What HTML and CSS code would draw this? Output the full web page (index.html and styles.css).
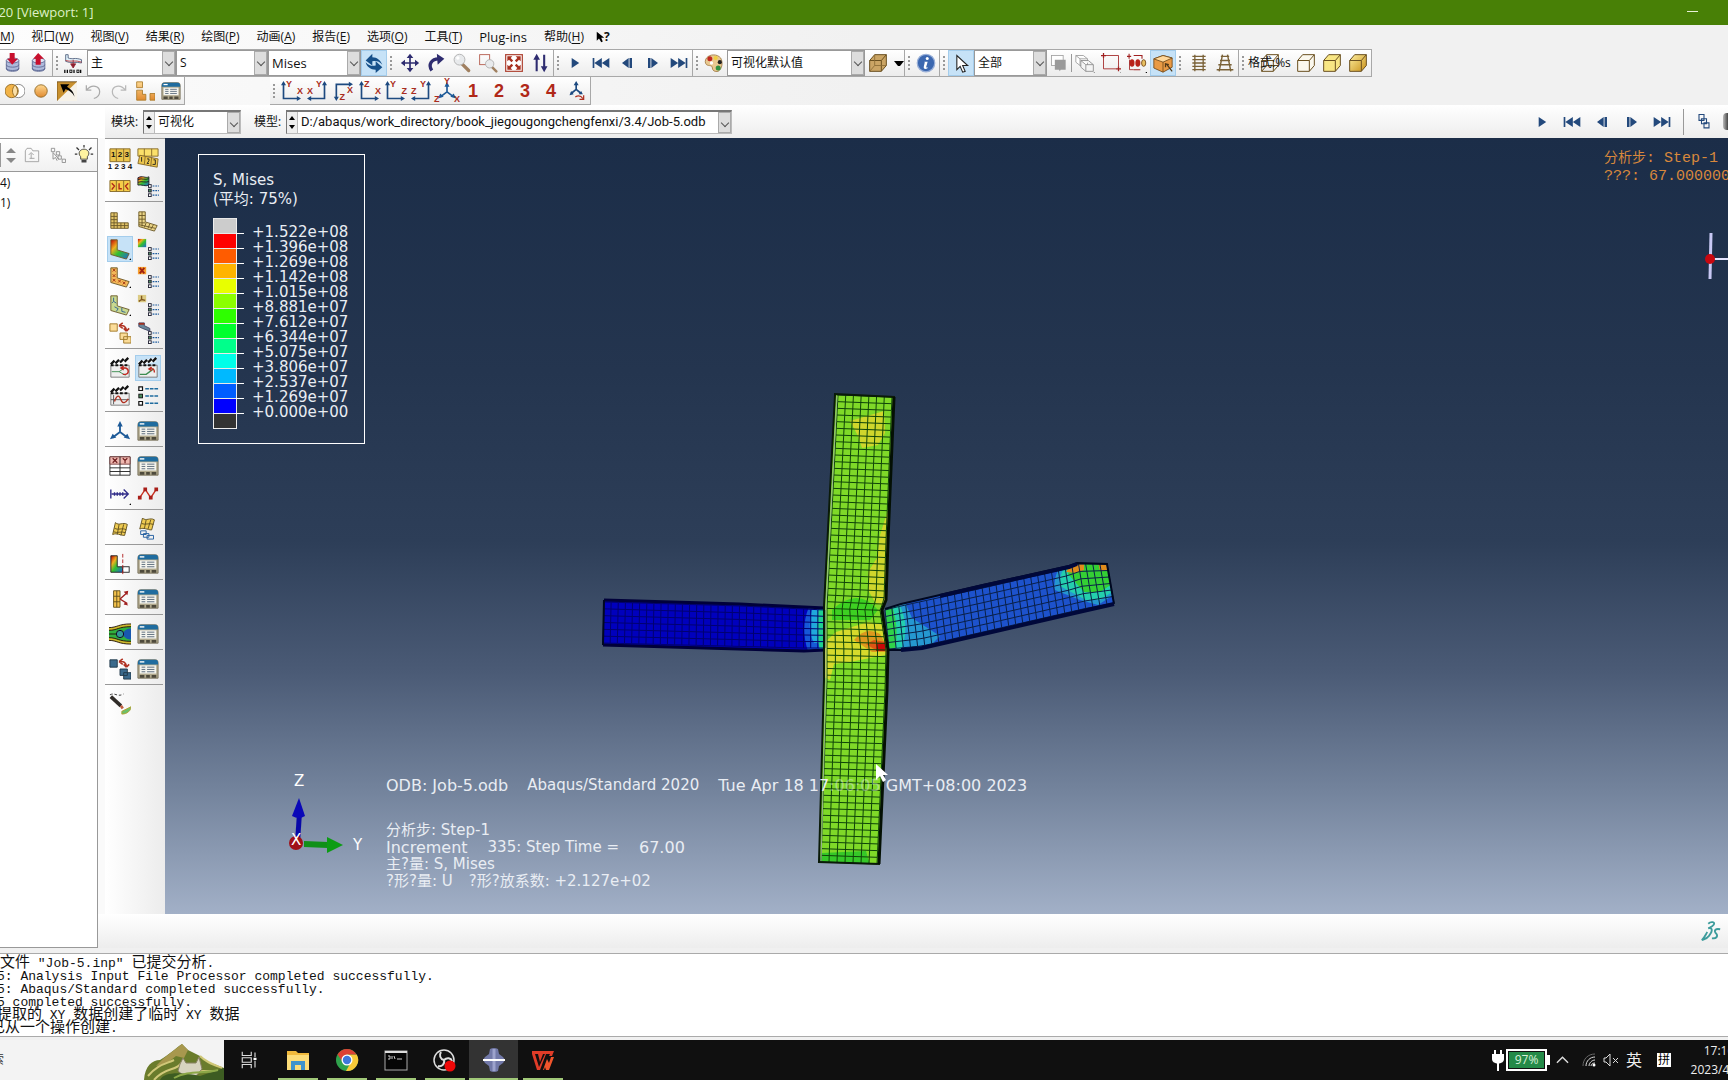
FILE: index.html
```html
<!DOCTYPE html>
<html lang="zh-CN">
<head>
<meta charset="utf-8">
<title>Abaqus/CAE 2020 [Viewport: 1]</title>
<link rel="stylesheet" href="styles.css">
</head>
<body>
<svg class="defs" aria-hidden="true">
  <defs>
    <linearGradient id="rainbow" x1="0" y1="0" x2="1" y2="1"><stop offset="0" stop-color="#c00000"/><stop offset=".3" stop-color="#f0b020"/><stop offset=".55" stop-color="#30c030"/><stop offset="1" stop-color="#2060e0"/></linearGradient>
    <linearGradient id="gold" x1="0" y1="0" x2="1" y2="1"><stop offset="0" stop-color="#fff0a0"/><stop offset="1" stop-color="#c89018"/></linearGradient>
    <linearGradient id="orange" x1="0" y1="0" x2="0" y2="1"><stop offset="0" stop-color="#ffd890"/><stop offset="1" stop-color="#e08a30"/></linearGradient>
    <symbol id="db" viewBox="0 0 24 24"><path d="M4 9v10c0 4 15 4 15 0V9" fill="#aebadb" stroke="#5a6590"/><ellipse cx="11.500" cy="9" rx="7.500" ry="3" fill="#dfe5f5" stroke="#5a6590"/><path d="M4 14c0 4 15 4 15 0M4 18c0 4 15 4 15 0" fill="none" stroke="#5a6590"/></symbol>
    <symbol id="open-db" viewBox="0 0 24 24"><use href="#db"/><path d="M8 0h6v7h4l-7 7-6-7h3z" fill="#c8102e"/></symbol>
    <symbol id="save-db" viewBox="0 0 24 24"><use href="#db"/><path d="M8 14h6V7h4l-7-7-6 7h3z" fill="#c8102e"/></symbol>
    <symbol id="field" viewBox="0 0 24 24"><path d="M2 2h3v4c5 2 8-1 16 2v4c-7-2-13 1-19-2z" fill="#dff0fa" stroke="#4a5a78"/><path d="M2 9c5 2 12-1 19 2" stroke="#c03030" fill="none"/><path d="M11 8v6M8 13h6l-3 5z" stroke="#902030" fill="#902030"/><path d="M1 20v4M4 20v4M12 20v4M20 20v4" stroke="#000" stroke-width="1.500"/><rect x="7" y="20.500" width="2.500" height="3" fill="none" stroke="#000"/><rect x="15.500" y="20.500" width="2.500" height="3" fill="none" stroke="#000"/></symbol>
    <symbol id="sync" viewBox="0 0 24 24"><path d="M2 9l8-8v4c6 0 10 4 12 9-4-4-7-5-12-4v5zM22 17l-8 7v-4C8 20 3 16 2 11c4 4 7 5 12 4v-5z" fill="#16508a"/></symbol>
    <symbol id="move" viewBox="0 0 24 24"><path d="M12 3v18M3 12h18" stroke="#2e2c70" stroke-width="2"/><path d="M12 1l4 5H8zM12 23l4-5H8zM1 12l5-4v8zM23 12l-5-4v8z" fill="#2e2c70"/></symbol>
    <symbol id="rotate" viewBox="0 0 24 24"><path d="M7 21C2 14 7 7 15 7" fill="none" stroke="#2e2c70" stroke-width="4"/><path d="M13 1l9 6-8 7z" fill="#2e2c70"/></symbol>
    <symbol id="zoom" viewBox="0 0 24 24"><path d="M12 13l8 8" stroke="#a08060" stroke-width="4" stroke-linecap="round"/><circle cx="9" cy="8" r="6.500" fill="#e8eaec" stroke="#aaa"/><circle cx="7" cy="6" r="2" fill="#fff"/></symbol>
    <symbol id="zoombox" viewBox="0 0 24 24"><rect x="2" y="2" width="12" height="12" fill="none" stroke="#b05040"/><path d="M16 16l6 6" stroke="#a08060" stroke-width="3" stroke-linecap="round"/><circle cx="14" cy="13" r="5" fill="#e8eaec" stroke="#aaa"/></symbol>
    <symbol id="fit" viewBox="0 0 24 24"><rect x="2" y="2" width="20" height="20" fill="#fff" stroke="#b04838" stroke-width="1.500"/><path d="M4 4h6L8 6l3 3-2 2-3-3-2 2zM20 4h-6l2 2-3 3 2 2 3-3 2 2zM4 20h6l-2-2 3-3-2-2-3 3-2-2zM20 20h-6l2-2-3-3 2-2 3 3 2-2z" fill="#a83020"/></symbol>
    <symbol id="updown" viewBox="0 0 24 24"><path d="M8 5v17M17 2v17" stroke="#2e2c70" stroke-width="2.500"/><path d="M8 1l4 7H4zM17 23l4-7h-8z" fill="#2e2c70"/></symbol>
    <symbol id="play" viewBox="0 0 24 24"><path d="M8 6l9 6-9 6z" fill="#23497c"/></symbol>
    <symbol id="first" viewBox="0 0 24 24"><path d="M2 6h2v12H2zM13 6v12l-9-6zM22 6v12l-9-6z" fill="#23497c"/></symbol>
    <symbol id="prev" viewBox="0 0 24 24"><path d="M15 6h3v12h-3zM14 6v12l-8-6z" fill="#23497c"/></symbol>
    <symbol id="next" viewBox="0 0 24 24"><path d="M6 6h3v12H6zM10 6v12l8-6z" fill="#23497c"/></symbol>
    <symbol id="last" viewBox="0 0 24 24"><path d="M20 6h2v12h-2zM11 6v12l9-6zM2 6v12l9-6z" fill="#23497c"/></symbol>
    <symbol id="palette" viewBox="0 0 24 24"><path d="M3 6C7 1 16 1 20 6c3 5 2 13-3 16-4 1-7-1-7-4 0-4-4-2-7-4-2-2-2-5 0-8z" fill="#e8c890" stroke="#a07840"/><circle cx="7" cy="7" r="3" fill="#c02820"/><circle cx="14" cy="6" r="2.500" fill="#f0d040"/><circle cx="19" cy="11" r="2.500" fill="#202020"/><circle cx="17" cy="18" r="3" fill="#309040"/><circle cx="9" cy="12" r="2" fill="#fff"/></symbol>
    <symbol id="cube" viewBox="0 0 24 24"><path d="M2 9l6-7h14v13l-6 7H2z" stroke="#6a5020" stroke-width="1.200"/><path d="M2 9h14v13M16 9l6-7" fill="none" stroke="#6a5020" stroke-width="1.200"/></symbol>
    <symbol id="wirecube" viewBox="0 0 24 24"><use href="#cube" fill="none"/><path d="M8 2v13h14M8 15l-6 7" fill="none" stroke="#6a5020" stroke-width="1.200"/></symbol>
    <symbol id="cubebrown" viewBox="0 0 24 24"><use href="#cube" fill="#cba565"/><path d="M8 2v13h14M8 15l-6 7" fill="none" stroke="#8a6b35"/></symbol>
    <symbol id="info" viewBox="0 0 24 24"><circle cx="12" cy="12" r="10.500" fill="#3c68b0" stroke="#9ab0d8" stroke-width="1.500"/><circle cx="13.500" cy="6.500" r="1.800" fill="#fff"/><path d="M10 10.500h4l-2 7 2-.5-.5 1.500c-3 1.500-5 0-4-3l1-4z" fill="#fff"/></symbol>
    <symbol id="pointer" viewBox="0 0 24 24"><path d="M7 3v17l4-4 3 7 3-1-3-7h6z" fill="#fff" stroke="#222" stroke-width="1.300"/></symbol>
    <symbol id="greysq" viewBox="0 0 24 24"><rect x="3" y="3" width="14" height="12" fill="#fff" stroke="#a0a0a0"/><path d="M7 8h13v12h-6l-1 2-1-2H7z" fill="#9a9a9a"/></symbol>
    <symbol id="greycubes" viewBox="0 0 24 24"><path d="M1 3h9l5 4v8H6l-5-4zM1 3l5 4h9M6 7v8" fill="#fff" stroke="#999"/><path d="M7 9h9l6 5v8h-9l-6-5zM7 9l6 5h9M13 14v8" fill="#f4f4f4" stroke="#888"/><path d="M25 21v4h-4z" fill="#999"/></symbol>
    <symbol id="selbox" viewBox="0 0 24 24"><path d="M0 3h6M3 0v6M18 19h6M21 16v6" stroke="#a02020" stroke-width="1.500"/><path d="M6 3h15v13M18 19H3V6" fill="none" stroke="#a02020"/><path d="M26 21v4h-4z"/></symbol>
    <symbol id="selnodes" viewBox="0 0 24 24"><path d="M0 4h5M2.500 1v6M8 3h10v4M8 20h8" fill="none" stroke="#a02020" stroke-width="1.300"/><ellipse cx="6" cy="12" rx="3" ry="4.500" fill="#b82018"/><ellipse cx="13" cy="12" rx="3" ry="4.500" fill="#b82018"/><ellipse cx="20" cy="12" rx="2.500" ry="4" fill="#e8c060" stroke="#704010"/><path d="M3 8v12h5" fill="none" stroke="#a02020"/><path d="M25 21v4h-4z"/></symbol>
    <symbol id="ocube" viewBox="0 0 24 24"><path d="M1 7l11-4 11 3v11l-11 6-11-5z" fill="#e99a45" stroke="#704818"/><path d="M1 7l11-4 11 3-11 5z" fill="#ffd79a" stroke="#704818"/><path d="M12 11v12" stroke="#704818"/><path d="M23 22l-7-9M15 17v-4l4 1" fill="none" stroke="#503818" stroke-width="1.500"/></symbol>
    <symbol id="ladder" viewBox="0 0 24 24"><path d="M7 2v20M17 2v20M4 4h16M4 8h16M4 12h16M4 16h16M4 20h16" stroke="#7a6238" stroke-width="1.600"/></symbol>
    <symbol id="ladder2" viewBox="0 0 24 24"><path d="M9 2L5 22M15 2l4 20M7 4h10M6 9h12M4 14h16M2 20h20" stroke="#7a6238" stroke-width="1.700"/></symbol>
    <symbol id="venn" viewBox="0 0 24 24"><circle cx="16" cy="12" r="8" fill="#fff" stroke="#777"/><circle cx="8" cy="12" r="8" fill="#f2b347" stroke="#8a6420"/><path d="M12 5c4 4 4 10 0 14-4-4-4-10 0-14z" fill="#fbe0a8" stroke="#8a6420"/></symbol>
    <symbol id="disc" viewBox="0 0 24 24"><circle cx="12" cy="12" r="7.500" fill="url(#orange)" stroke="#8a6420"/></symbol>
    <symbol id="flip" viewBox="0 0 24 24"><rect x="0" y="1" width="24" height="23" fill="#c8902e" stroke="#6a4a18"/><path d="M24 1v23H0z" fill="#f6f2e8"/><path d="M4 4l11 0-3 3c5 3 8 6 9 12-3-6-7-8-11-9l-2 4z" fill="#000"/></symbol>
    <symbol id="undo" viewBox="0 0 24 24"><path d="M4 5v6h6M4 11c7-8 16-5 16 2 0 4-3 7-7 8" fill="none" stroke="#aaa" stroke-width="1.500"/></symbol>
    <symbol id="redo" viewBox="0 0 24 24"><path d="M20 5v6h-6M20 11C13 3 4 6 4 13c0 4 3 7 7 8" fill="none" stroke="#b8b8b8" stroke-width="1.500"/></symbol>
    <symbol id="blocks" viewBox="0 0 24 24"><path d="M2 1h7v7H2zM2 11h7v5h4v7H2zM18 15h6v8h-6z" fill="url(#orange)" stroke="#a87828"/></symbol>
    <symbol id="dialog" viewBox="0 0 24 24"><path d="M1 6c0-3 1-4 3-4h16c2 0 3 1 3 4v16H1z" fill="#b0a88c" stroke="#77705a"/><path d="M1 6c0-3 1-4 3-4h16c2 0 3 1 3 4v1H1z" fill="#1f6c9f"/><rect x="3" y="3.500" width="5" height="1.500" fill="#fff"/><rect x="3" y="8" width="18" height="9" fill="#f4f4ee"/><path d="M5 10h4M5 12.500h4M5 15h4M11 10h8M11 12.500h8M11 15h8" stroke="#567"/><path d="M3 18.500h5v3H3zM10 18.500h4v3h-4zM16 18.500h5v3h-5z" fill="#4e4a3c"/></symbol>
    <symbol id="axes" viewBox="0 0 24 24"><path d="M3 3v18h18" fill="none" stroke="#1d4a80" stroke-width="2"/><path d="M3 0l3 5H0zM24 21l-5-3v6z" fill="#1d4a80"/></symbol>
    <symbol id="axes-r" viewBox="0 0 24 24"><path d="M21 3v18H3" fill="none" stroke="#1d4a80" stroke-width="2"/><path d="M21 0l3 5h-6zM0 21l5-3v6z" fill="#1d4a80"/></symbol>
    <symbol id="axes-d" viewBox="0 0 24 24"><path d="M4 21V4h17" fill="none" stroke="#1d4a80" stroke-width="2"/><path d="M4 24l3-5H1zM24 4l-5-3v6z" fill="#1d4a80"/></symbol>
    <symbol id="triad" viewBox="0 0 24 24"><path d="M12 4v9L4 19M12 13l8 6" fill="none" stroke="#1d5a98" stroke-width="2"/><path d="M12 1l3 6H9zM1 21l3-6 4 4zM23 21l-3-6-4 4z" fill="#1d5a98"/></symbol>
    <symbol id="triadrot" viewBox="0 0 24 24"><path d="M11 3v7l-6 5M11 10l6 5" fill="none" stroke="#1d4a80" stroke-width="2"/><path d="M11 0l3 5H8zM3 17l2-5 3 4zM19 16l-5 0 3-4z" fill="#1d4a80"/><path d="M10 19c4-2 7-1 9 2M20 17v5h-5" fill="none" stroke="#b03020" stroke-width="1.500"/></symbol>
    <symbol id="elnum" viewBox="0 0 24 24"><path d="M1 2h22v14H1zM8 2v14M16 2v14" fill="#ecc64c" stroke="#85692a"/></symbol>
    <symbol id="elnum2" viewBox="0 0 24 24"><path d="M1 2h22v8H1zM8 2v8M16 2v8" fill="#fbe06a" stroke="#85692a"/><path d="M3 9l20 4-1 9-21-4zM9 10l-1 9M16 11l-1 10" fill="#ecc64c" stroke="#85692a"/><path d="M5 11v5M11 13h2v2l-2 3h2M18 14h2v5h-3" fill="none" stroke="#222"/></symbol>
    <symbol id="ellet" viewBox="0 0 24 24"><path d="M1 6h22v12H1zM8 6v12M16 6v12" fill="#f6cc48" stroke="#85692a"/><path d="M3 9l3 3-3 4M11 9v6h3M21 9l-3 3 3 4" fill="none" stroke="#b02818" stroke-width="1.500"/></symbol>
    <symbol id="opts" viewBox="0 0 24 24"><rect x="12.500" y="10.500" width="3" height="3" fill="#fff" stroke="#223"/><rect x="12.500" y="15.500" width="3" height="3" fill="#4c8c5c" stroke="#223"/><rect x="12.500" y="20.500" width="3" height="3" fill="#fff" stroke="#223"/><path d="M17 12h7M17 17h7M17 22h7" stroke="#1f5c9f" stroke-width="1.300" stroke-dasharray="2 1"/></symbol>
    <symbol id="contopt" viewBox="0 0 24 24"><path d="M1 3c5-3 8 1 12-1v9c-4 2-8-1-12 0z" fill="url(#rainbow)" stroke="#223"/><path d="M1 5c5-2 8 1 12-1M1 8c5-2 8 1 12-1" stroke="#222" fill="none"/><use href="#opts"/></symbol>
    <symbol id="mesh" viewBox="0 0 24 24"><path d="M2 3h7v11h12v6H2z" fill="#e2c468" stroke="#6c5a28"/><path d="M5.500 3v17M9 14v6M13 14v6M17 14v6M2 7h7M2 10.500h7M2 14h7M2 17h19" stroke="#6c5a28" fill="none"/></symbol>
    <symbol id="bent" viewBox="0 0 24 24"><path d="M2 2h7v11l13 4-3 6-17-5z" stroke="#6c5a28"/></symbol>
    <symbol id="meshdef" viewBox="0 0 24 24"><use href="#bent" fill="#ecd688"/><path d="M5.500 2v16M2 6h7M2 10h7M2 14h7M2 16l18 4M10 14l-2 5M14 15l-2 5M18 16l-3 5" stroke="#6c5a28" fill="none"/></symbol>
    <symbol id="contour" viewBox="0 0 24 24"><use href="#bent" fill="url(#rainbow)"/><path d="M25 21v4h-4z"/></symbol>
    <symbol id="contset" viewBox="0 0 24 24"><rect x="1" y="1" width="9" height="9" fill="url(#rainbow)"/><use href="#opts"/></symbol>
    <symbol id="symb" viewBox="0 0 24 24"><use href="#bent" fill="#f4b858"/><path d="M4 3l3 3M7 3L4 6M4 9l3 3M7 9l-3 3M4 14l3 3M7 14l-3 3M10 15l3 3M13 15l-3 3M15 17l3 3M18 17l-3 3" stroke="#a03010" fill="none"/><path d="M25 21v4h-4z"/></symbol>
    <symbol id="symbset" viewBox="0 0 24 24"><rect x="1" y="1" width="9" height="8" fill="#f6a030"/><path d="M3 2l5 6M8 2L3 8" stroke="#a02010" stroke-width="2"/><use href="#opts"/></symbol>
    <symbol id="orient" viewBox="0 0 24 24"><use href="#bent" fill="#c8d890"/><path d="M5 4v4l-2 2M5 8l3 2M6 14l4 2-2 3M14 15v4l4 1" stroke="#306090" fill="none"/><path d="M25 21v4h-4z"/></symbol>
    <symbol id="orientset" viewBox="0 0 24 24"><rect x="1" y="1" width="9" height="8" fill="#dccb84"/><path d="M5 2v4l-3 2M5 6l4 1" stroke="#805820" stroke-width="1.500" fill="none"/><use href="#opts"/></symbol>
    <symbol id="overlay" viewBox="0 0 24 24"><path d="M1 2h8v8H1zM12 12h8v7h-8zM16 16h8v7h-8z" fill="#fbdc98" stroke="#a07828"/><path d="M11 4c5-1 8 1 8 6M11 4l4-3M11 4l4 3M19 10l-3-3M19 10l3-3" fill="none" stroke="#b03020" stroke-width="1.700"/></symbol>
    <symbol id="overset" viewBox="0 0 24 24"><path d="M2 1h6v3l6 3v3L6 7 2 5z" fill="#68889a" stroke="#446"/><path d="M2 2h6" stroke="#a03020" stroke-width="2"/><use href="#opts"/></symbol>
    <symbol id="clap" viewBox="0 0 24 24"><path d="M2 9h20v13H2z" fill="#eee" stroke="#777"/><path d="M1 5l19-4 1 4-19 4z" fill="#fff"/><path d="M2 8l4-4M7 7l4-4M12 6l4-4M17 5l4-4" stroke="#111" stroke-width="2.500"/><path d="M2 9h20" stroke="#111" stroke-width="2" stroke-dasharray="3 2"/></symbol>
    <symbol id="clap1" viewBox="0 0 24 24"><use href="#clap"/><path d="M3 16h8l6-4M11 16l7 4" fill="none" stroke="#3c8c50"/><path d="M14 12h4c4 1 4 6 0 7h-3M16 10l-3 2 3 2" fill="none" stroke="#c02820" stroke-width="1.500"/></symbol>
    <symbol id="clap2" viewBox="0 0 24 24"><use href="#clap"/><path d="M3 19h7l8-6" fill="none" stroke="#3c8c50" stroke-width="1.500"/><path d="M14 13c3-1 5 0 5 4M16 11l-3 2 3 2" fill="none" stroke="#c02820" stroke-width="1.500"/></symbol>
    <symbol id="clap3" viewBox="0 0 24 24"><use href="#clap"/><path d="M2 16h20M5 11v10" stroke="#555"/><path d="M6 18c3-8 5-7 7-2s5 4 8-1" fill="none" stroke="#b03020" stroke-width="1.500"/></symbol>
    <symbol id="animopt" viewBox="0 0 24 24"><path d="M2 2h4v4H2zM2 18h4v4H2z" fill="#fff" stroke="#111" stroke-width="1.300"/><rect x="2" y="10" width="4" height="4" fill="#4c8c5c" stroke="#111"/><path d="M9 4h14M9 12h14M9 20h14" stroke="#1f6c9f" stroke-width="1.700" stroke-dasharray="4 1"/></symbol>
    <symbol id="xy" viewBox="0 0 24 24"><path d="M1 2h22v20H1z" fill="#fff" stroke="#222"/><path d="M1 2h22v8H1z" fill="#efb8b0" stroke="#7a4040"/><path d="M1 14h22M1 18h22M12 2v20" stroke="#222"/><path d="M4 3.500l5 5M9 3.500l-5 5M15 3.500l2.500 2.500 2.500-2.500M17.500 6v3" stroke="#702020" fill="none" stroke-width="1.300"/></symbol>
    <symbol id="path" viewBox="0 0 24 24"><path d="M2 7v10M3 12h18M16 7l5 5-5 5M6 10v4M9 10v4M12 10v4M15 10v4" fill="none" stroke="#302c88" stroke-width="1.500"/><path d="M25 21v4h-4z"/></symbol>
    <symbol id="zigzag" viewBox="0 0 24 24"><path d="M3 16l6-9 6 9 6-9" fill="none" stroke="#c83020" stroke-width="1.500"/><path d="M1 14h4v4H1zM7 5h4v4H7zM13 14h4v4h-4zM19 5h4v4h-4z" fill="#a81e18"/></symbol>
    <symbol id="freebody" viewBox="0 0 24 24"><path d="M7 5c4 4 8-1 13 2l-3 12c-5 0-8-3-13-1z" fill="#efcb52" stroke="#60501e"/><path d="M11 7l-2 11M16 7l-3 12M6 11c4 3 8-1 13 2M5 15c4 2 8-1 13 1" fill="none" stroke="#60501e"/></symbol>
    <symbol id="freebody2" viewBox="0 0 24 24"><path d="M6 0c4 4 8-1 13 2l-3 11c-5 0-8-3-13-1z" fill="#efcb52" stroke="#60501e"/><path d="M10 2l-2 10M15 2l-3 10M5 6c4 2 8-1 13 1" fill="none" stroke="#60501e"/><path d="M4 14h6v4H4zM7 17h6v4H7zM11 19h7v4h-7z" fill="none" stroke="#1f5c9f"/></symbol>
    <symbol id="viewcut" viewBox="0 0 24 24"><path d="M2 3h7v12h6v6H2z" fill="url(#rainbow)" stroke="#222"/><rect x="15" y="15" width="7" height="6" fill="#fff" stroke="#222"/><path d="M15 1v22" stroke="#b02020" stroke-dasharray="4 2"/></symbol>
    <symbol id="split" viewBox="0 0 24 24"><path d="M5 3h7v18H5zM8.500 3v18M5 9h7M5 15h7" fill="#f4c24a" stroke="#60501e"/><path d="M12 12l8-7M12 12l8 5" stroke="#a02020" stroke-width="1.500"/><path d="M21 3l-1 5-4-4zM21 19l-5-1 2-3z" fill="#a02020"/></symbol>
    <symbol id="stream" viewBox="0 0 24 24"><path d="M0 5c9 0 10-4 24-4v22C10 23 9 19 0 19z" fill="#cdb82c"/><path d="M0 8c9 0 10-4 24-4v16C10 20 9 16 0 16z" fill="#30b040"/><path d="M14 12c4-5 6-6 10-6v12c-4 0-6-1-10-6z" fill="#1858b0"/><path d="M0 5c9 0 10-4 24-4M0 19c9 0 10 4 24 4M0 8c9 0 10-4 24-4M0 16c9 0 10 4 24 4M0 12h8" fill="none" stroke="#201008"/><circle cx="12" cy="12" r="4" fill="#309898" stroke="#102"/></symbol>
    <symbol id="ovl2" viewBox="0 0 24 24"><path d="M1 2h8v8H1zM12 12h8v7h-8zM16 16h8v7h-8z" fill="#3b6a8c" stroke="#203848"/><path d="M11 4c5-1 8 1 8 6M11 4l4-3M11 4l4 3M19 10l-3-3M19 10l3-3" fill="none" stroke="#b03020" stroke-width="1.700"/></symbol>
    <symbol id="brush" viewBox="0 0 24 24"><path d="M2 4l11 10" stroke="#302c28" stroke-width="4"/><path d="M13 14l2 3" stroke="#c06040" stroke-width="3"/><path d="M14 20l10-5c0 4-4 8-10 8z" fill="#6cc068" stroke="#b0a030"/><path d="M1 2c6-3 8 3 15-1" fill="none" stroke="#333" stroke-dasharray="3 2"/></symbol>
    <symbol id="cascade" viewBox="0 0 24 24"><path d="M6 3h6v7H6zM9 8h6v6H9zM12 13h6v6h-6z" fill="none" stroke="#23497c" stroke-width="1.300"/></symbol>
    <symbol id="upfolder" viewBox="0 0 24 24"><path d="M4 7l2-3h5l2 3h7v13H4zM9 16h6M11 16v-6M8 12l3-3 3 3" fill="none" stroke="#999"/></symbol>
    <symbol id="treecfg" viewBox="0 0 24 24"><path d="M4 4h4v4H4zM10 8h4v4h-4zM12 13h4v4h-4zM17 17h4v4h-4zM6 9l7 8M6 9v8l3-2 2 4" fill="none" stroke="#888"/></symbol>
    <symbol id="bulb" viewBox="0 0 24 24"><path d="M8 14C4 10 7 5 12 5s8 5 4 9v3H8z" fill="#fff3a0" stroke="#333"/><path d="M9 18h6v3H9z" fill="#444"/><path d="M12 0v3M3 3l3 3M21 3l-3 3M1 11h3M20 11h3" stroke="#333" stroke-width="1.500"/></symbol>
    <symbol id="helpcur" viewBox="0 0 24 24"><path d="M5 5v12l3-3 3 5 2-1-2-5h4z" fill="#000"/></symbol>
  </defs>
</svg>

<div class="app">
  <header class="titlebar"><span>020 [Viewport: 1]</span><button class="minimize" aria-label="最小化"></button></header>

  <nav class="menubar">
    <button><u>M</u>)</button><button>视口(<u>W</u>)</button><button>视图(<u>V</u>)</button><button>结果(<u>R</u>)</button><button>绘图(<u>P</u>)</button><button>动画(<u>A</u>)</button><button>报告(<u>E</u>)</button><button>选项(<u>O</u>)</button><button>工具(<u>T</u>)</button><button class="latin">Plug-ins</button><button>帮助(<u>H</u>)</button><button class="help" aria-label="上下文帮助"><svg class="ic"><use href="#helpcur"/></svg><b>?</b></button>
  </nav>

  <div class="toolbar">
    <div class="group">
      <button class="tb" aria-label="打开"><svg class="ic"><use href="#open-db"/></svg></button><button class="tb" aria-label="保存"><svg class="ic"><use href="#save-db"/></svg></button>
    </div>
    <div class="group">
      <i class="grip"></i><button class="tb" aria-label="场输出"><svg class="ic"><use href="#field"/></svg></button>
      <span class="combo w89"><select aria-label="变量位置"><option>主</option></select></span>
      <span class="combo w92"><select aria-label="变量"><option>S</option></select></span>
      <span class="combo w93"><select class="latin" aria-label="不变量"><option>Mises</option></select></span>
      <button class="tb on" aria-label="同步"><svg class="ic"><use href="#sync"/></svg></button><i class="grip wide"></i>
      <button class="tb" aria-label="平移"><svg class="ic"><use href="#move"/></svg></button><button class="tb" aria-label="旋转"><svg class="ic"><use href="#rotate"/></svg></button><button class="tb" aria-label="缩放"><svg class="ic"><use href="#zoom"/></svg></button><button class="tb" aria-label="框选缩放"><svg class="ic"><use href="#zoombox"/></svg></button><button class="tb" aria-label="适合窗口"><svg class="ic"><use href="#fit"/></svg></button><button class="tb" aria-label="循环视图"><svg class="ic"><use href="#updown"/></svg></button>
    </div>
    <div class="group">
      <i class="grip"></i><button class="tb" aria-label="播放"><svg class="ic"><use href="#play"/></svg></button><button class="tb" aria-label="第一帧"><svg class="ic"><use href="#first"/></svg></button><button class="tb" aria-label="上一帧"><svg class="ic"><use href="#prev"/></svg></button><button class="tb" aria-label="下一帧"><svg class="ic"><use href="#next"/></svg></button><button class="tb" aria-label="最后一帧"><svg class="ic"><use href="#last"/></svg></button>
    </div>
    <div class="group">
      <i class="grip"></i><button class="tb" aria-label="颜色"><svg class="ic"><use href="#palette"/></svg></button>
      <span class="combo w138"><select aria-label="颜色映射"><option>可视化默认值</option></select></span>
      <button class="tb" aria-label="透明"><svg class="ic"><use href="#cubebrown"/></svg></button><button class="caret" aria-label="更多"></button>
    </div>
    <div class="group"><i class="grip"></i><button class="tb" aria-label="查询"><svg class="ic"><use href="#info"/></svg></button></div>
    <div class="group">
      <i class="grip"></i><button class="tb on" aria-label="选择"><svg class="ic"><use href="#pointer"/></svg></button>
      <span class="combo w73"><select aria-label="选择过滤"><option>全部</option></select></span>
      <button class="tb narrow" aria-label="前后"><svg class="ic"><use href="#greysq"/></svg></button><i class="rule"></i>
      <button class="tb" aria-label="内部"><svg class="ic"><use href="#greycubes"/></svg></button><button class="tb" aria-label="矩形"><svg class="ic"><use href="#selbox"/></svg></button><button class="tb" aria-label="节点"><svg class="ic"><use href="#selnodes"/></svg></button><button class="tb on" aria-label="拾取"><svg class="ic"><use href="#ocube"/></svg></button><i class="grip wide"></i>
      <button class="tb" aria-label="平行"><svg class="ic"><use href="#ladder"/></svg></button><button class="tb" aria-label="透视"><svg class="ic"><use href="#ladder2"/></svg></button>
    </div>
    <div class="group">
      <i class="grip"></i><button class="tb format"><svg class="ic"><use href="#wirecube"/></svg><span>格式:%s</span></button><button class="tb" aria-label="隐藏线"><svg class="ic"><use href="#cube" fill="#fbf8ee"/></svg></button><button class="tb" aria-label="填充"><svg class="ic"><use href="#cube" fill="#f8e684"/></svg></button><button class="tb" aria-label="着色"><svg class="ic"><use href="#cube" fill="url(#gold)"/></svg></button>
    </div>
  </div>

  <div class="toolbar second">
    <div class="group first-group">
      <button class="tb" aria-label="替换"><svg class="ic"><use href="#venn"/></svg></button><button class="tb" aria-label="全部"><svg class="ic"><use href="#disc"/></svg></button><button class="tb" aria-label="反转"><svg class="ic"><use href="#flip"/></svg></button><button class="tb" aria-label="撤销"><svg class="ic"><use href="#undo"/></svg></button><button class="tb" aria-label="重做"><svg class="ic"><use href="#redo"/></svg></button><button class="tb" aria-label="显示组"><svg class="ic"><use href="#blocks"/></svg></button><button class="tb" aria-label="管理器"><svg class="ic"><use href="#dialog"/></svg></button>
    </div>
    <div class="group views">
      <i class="grip"></i>
      <button class="tb ax"><svg class="ic"><use href="#axes"/></svg><sup>Y</sup><sub>X</sub></button><button class="tb ax rev"><svg class="ic"><use href="#axes-r"/></svg><sup>Y</sup><sub>X</sub></button><button class="tb ax down"><svg class="ic"><use href="#axes-d"/></svg><sup>X</sup><sub>Z</sub></button><button class="tb ax"><svg class="ic"><use href="#axes"/></svg><sup>Z</sup><sub>X</sub></button><button class="tb ax"><svg class="ic"><use href="#axes"/></svg><sup>Y</sup><sub>Z</sub></button><button class="tb ax rev"><svg class="ic"><use href="#axes-r"/></svg><sup>Y</sup><sub>Z</sub></button><button class="tb ax iso"><svg class="ic"><use href="#triad"/></svg><sup>Y</sup><sub><span>Z</span><span>X</span></sub></button><button class="tb num">1</button><button class="tb num">2</button><button class="tb num">3</button><button class="tb num">4</button><button class="tb" aria-label="自定义"><svg class="ic"><use href="#triadrot"/></svg></button>
    </div>
  </div>

  <div class="context">
    <label for="module">模块:</label>
    <span class="combo spin w98"><i class="spinner"></i><select id="module"><option>可视化</option></select></span>
    <label for="model">模型:</label>
    <span class="combo spin w445"><i class="spinner"></i><select id="model" class="file"><option>D:/abaqus/work_directory/book_jiegougongchengfenxi/3.4/Job-5.odb</option></select></span>
    <div class="player">
      <button class="tb" aria-label="播放"><svg class="ic"><use href="#play"/></svg></button><button class="tb" aria-label="第一帧"><svg class="ic"><use href="#first"/></svg></button><button class="tb" aria-label="上一帧"><svg class="ic"><use href="#prev"/></svg></button><button class="tb" aria-label="下一帧"><svg class="ic"><use href="#next"/></svg></button><button class="tb" aria-label="最后一帧"><svg class="ic"><use href="#last"/></svg></button>
    </div>
    <div class="arrange"><button class="tb" aria-label="层叠"><svg class="ic"><use href="#cascade"/></svg></button><i class="cylinder"></i></div>
  </div>

  <main class="work">
    <aside class="tree">
      <div class="tree-tools"><i class="edge"></i><i class="updn"></i><button class="tb" aria-label="上级"><svg class="ic"><use href="#upfolder"/></svg></button><button class="tb" aria-label="过滤"><svg class="ic"><use href="#treecfg"/></svg></button><button class="tb" aria-label="提示"><svg class="ic"><use href="#bulb"/></svg></button></div>
      <ul><li>4)</li><li>1)</li></ul>
    </aside>

    <div class="toolbox">
      <div class="tools"><button class="tb numbered"><svg class="ic"><use href="#elnum"/></svg><b>1 2 3</b><small>1 2 3 4</small></button><button class="tb"><svg class="ic"><use href="#elnum2"/></svg></button><button class="tb"><svg class="ic"><use href="#ellet"/></svg></button><button class="tb"><svg class="ic"><use href="#contopt"/></svg></button></div>
      <div class="tools"><button class="tb"><svg class="ic"><use href="#mesh"/></svg></button><button class="tb"><svg class="ic"><use href="#meshdef"/></svg></button><button class="tb on"><svg class="ic"><use href="#contour"/></svg></button><button class="tb"><svg class="ic"><use href="#contset"/></svg></button><button class="tb"><svg class="ic"><use href="#symb"/></svg></button><button class="tb"><svg class="ic"><use href="#symbset"/></svg></button><button class="tb"><svg class="ic"><use href="#orient"/></svg></button><button class="tb"><svg class="ic"><use href="#orientset"/></svg></button><button class="tb"><svg class="ic"><use href="#overlay"/></svg></button><button class="tb"><svg class="ic"><use href="#overset"/></svg></button></div>
      <div class="tools"><button class="tb"><svg class="ic"><use href="#clap1"/></svg></button><button class="tb on"><svg class="ic"><use href="#clap2"/></svg></button><button class="tb"><svg class="ic"><use href="#clap3"/></svg></button><button class="tb"><svg class="ic"><use href="#animopt"/></svg></button></div>
      <div class="tools"><button class="tb"><svg class="ic"><use href="#triad"/></svg></button><button class="tb"><svg class="ic"><use href="#dialog"/></svg></button></div>
      <div class="tools"><button class="tb"><svg class="ic"><use href="#xy"/></svg></button><button class="tb"><svg class="ic"><use href="#dialog"/></svg></button><button class="tb"><svg class="ic"><use href="#path"/></svg></button><button class="tb"><svg class="ic"><use href="#zigzag"/></svg></button></div>
      <div class="tools"><button class="tb"><svg class="ic"><use href="#freebody"/></svg></button><button class="tb"><svg class="ic"><use href="#freebody2"/></svg></button></div>
      <div class="tools"><button class="tb"><svg class="ic"><use href="#viewcut"/></svg></button><button class="tb"><svg class="ic"><use href="#dialog"/></svg></button></div>
      <div class="tools"><button class="tb"><svg class="ic"><use href="#split"/></svg></button><button class="tb"><svg class="ic"><use href="#dialog"/></svg></button></div>
      <div class="tools"><button class="tb"><svg class="ic"><use href="#stream"/></svg></button><button class="tb"><svg class="ic"><use href="#dialog"/></svg></button></div>
      <div class="tools"><button class="tb"><svg class="ic"><use href="#ovl2"/></svg></button><button class="tb"><svg class="ic"><use href="#dialog"/></svg></button></div>
      <div class="tools last"><button class="tb"><svg class="ic"><use href="#brush"/></svg></button></div>
    </div>

    <section class="viewport">
      <svg class="scene" aria-label="S, Mises 云图">
        <defs>
          <clipPath id="c-left"><path d="M604 600L740 604 825 608V650L804 651 603 645z"/></clipPath>
          <clipPath id="c-right"><path d="M885 609L901 604 983 585 1069 566 1077 563 1107 564 1114 604 1083 611 983 634 922 648 901 650 889 650z"/></clipPath>
          <clipPath id="c-mid"><path d="M835 395L894 397 888 540 886 600 882 610 888 650 887 690 879 864 819 862 824 680V607z"/></clipPath>
        </defs>
        <g transform="translate(-165 -138)">
          <g clip-path="url(#c-left)">
            <rect x="600" y="595" width="230" height="60" fill="#0000bd"/>
            <path d="M809 607Q800 628 808 651H826V607z" fill="#1658d8"/>
            <path d="M813 607Q806 628 814 643H826V607z" fill="#20a8dc"/>
            <path d="M819 607Q814 628 820 651H826V607z" fill="#20d090"/>
          </g>
          <g clip-path="url(#c-right)">
            <rect x="880" y="555" width="240" height="100" fill="#1d52cc"/>
            <path d="M880 600H904L912 618 940 636 926 650H880z" fill="#2597d0"/>
            <path d="M880 600H897Q912 625 900 652H880z" fill="#24cfae"/>
            <path d="M880 600H890Q900 625 895 652H880z" fill="#2fd24a"/>
            <path d="M1066 558Q1052 575 1055 590L1080 600 1098 605 1118 592V558z" fill="#2597d0"/>
            <path d="M1070 558Q1058 575 1060 586L1086 600 1100 600 1118 588V558z" fill="#24cfae"/>
            <path d="M1074 558L1068 574 1084 592H1100L1118 580V558z" fill="#34cf34"/>
            <path d="M1066 572l6-10h12v8l-8 3zM1098 562h10l1 9h-9z" fill="#e08c1c"/>
          </g>
          <g clip-path="url(#c-mid)">
            <rect x="810" y="390" width="90" height="480" fill="#7fd928"/>
            <path d="M850 421L884 411 885 433 878 445 862 448 858 436z" fill="#cfd62c"/>
            <path d="M888 510L880 535 877 558 868 572 868 590 876 604 888 606z" fill="#cfd62c"/>
            <path d="M832 610Q858 586 878 610L870 620H832z" fill="#3dd022"/>
            <path d="M822 645L836 632 868 622 890 626V654L850 662 834 664 830 680 822 676z" fill="#d6da2c"/>
            <path d="M854 640Q866 626 880 634L890 652H872z" fill="#dd981e"/>
            <path d="M866 644l8-4 12 2v8l-12-1z" fill="#dd5414"/>
            <rect x="876" y="643" width="9" height="8" fill="#c80808"/>
            <path d="M822 853l44-2 4 14H818z" fill="#35c828"/>
          </g>
          <g id="mesh-lines" fill="none"></g>
          <path d="M604 600L740 604 825 608M825 650L804 651 603 645" fill="none" stroke="#00003a" stroke-width="3"/>
          <path d="M604 600L603 645M885 609L901 604 983 585 1069 566 1077 563 1107 564 1114 604" fill="none" stroke="#000820" stroke-width="2"/>
          <path d="M940 596L983 586 1069 567 1077 564M1114 604L1083 611 983 634 922 648 901 650" fill="none" stroke="#00083a" stroke-width="4"/>
          <path d="M901 650H889" fill="none" stroke="#000820" stroke-width="2"/>
          <path d="M835 395L824 607V680L819 862" fill="none" stroke="#0a1a08" stroke-width="2"/>
          <path d="M837 396L826 607V680L821 862" fill="none" stroke="#9ab890" stroke-width="1"/>
          <path d="M834 394L895 397M818 862L880 864" fill="none" stroke="#0a1a08" stroke-width="2"/>
          <path d="M894 397L888 540 886 600 882 610 888 650 887 690 879 864" fill="none" stroke="#041004" stroke-width="3"/>

          <path d="M295 843L297 812h5l-2 31z" fill="#0808a8"/><path d="M299 798l6 18q-6 4-13 0z" fill="#0a08b8"/>
          <path d="M304 841l24 1v6l-24-1z" fill="#109018"/><path d="M327 837l16 8-16 8z" fill="#0c9c14"/>
          <circle cx="296" cy="843" r="7" fill="#a01018"/>
          <text x="294" y="786">Z</text><text x="353" y="850">Y</text><text x="291" y="845">X</text>
        </g>
      </svg>

      <section class="state">
        <p class="odb"><span>ODB: Job-5.odb</span><span class="mid">Abaqus/Standard 2020</span><span>Tue Apr 18 17<em>:06:05</em> GMT+08:00 2023</span></p>
        <p>分析步: Step-1</p>
        <p class="inc"><span>Increment</span><span class="mid">335: Step Time =</span><span>67.00</span></p>
        <p>主?量: S, Mises</p>
        <p class="def"><span>?形?量: U</span><span>?形?放系数: +2.127e+02</span></p>
      </section>
      <svg class="cursor" viewBox="0 0 12 20"><path d="M0 0v16l4-4 3 6 3-2-3-5h5z" fill="#fff"/></svg>

      <section class="legend">
        <p>S, Mises</p>
        <p>(平均: 75%)</p>
        <div class="scale">
          <div class="bar"><i class="c0"></i><i class="c1"></i><i class="c2"></i><i class="c3"></i><i class="c4"></i><i class="c5"></i><i class="c6"></i><i class="c7"></i><i class="c8"></i><i class="c9"></i><i class="c10"></i><i class="c11"></i><i class="c12"></i><i class="c13"></i></div>
          <ol><li>+1.522e+08</li><li>+1.396e+08</li><li>+1.269e+08</li><li>+1.142e+08</li><li>+1.015e+08</li><li>+8.881e+07</li><li>+7.612e+07</li><li>+6.344e+07</li><li>+5.075e+07</li><li>+3.806e+07</li><li>+2.537e+07</li><li>+1.269e+07</li><li>+0.000e+00</li></ol>
        </div>
      </section>

      <section class="frame-info"><p><span>分析步</span>: Step-1</p><p>???: 67.000000</p></section>
      <svg class="compass" viewBox="0 0 28 50"><path d="M11 2L10 48" stroke="#c8c8f4" stroke-width="3"/><path d="M10 28h20" stroke="#e4e4ff" stroke-width="2"/><circle cx="10" cy="28" r="5" fill="#c80810"/></svg>
    </section>

    <div class="prompt"><svg viewBox="0 0 24 24" class="ds"><path d="M9 3c3-3 8-2 6 1-1 2-4 3-6 4 5-1 5 3 1 8-2 3-6 4-8 5 3-3 4-6 6-9M22 9c-5-1-7 1-5 4 3 3 2 6-4 6" fill="none" stroke="#3d9c9c" stroke-width="2"/></svg></div>
  </main>

  <section class="messages">
    <p><span>文件</span> "Job-5.inp" <span>已提交分析</span>.</p>
    <p class="cut">5: Analysis Input File Processor completed successfully.</p>
    <p class="cut">5: Abaqus/Standard completed successfully.</p>
    <p class="cut">5 completed successfully.</p>
    <p class="cut"><span>提取的</span> XY <span>数据创建了临时</span> XY <span>数据</span></p>
    <p class="cut more"><span>已从一个操作创建</span>.</p>
  </section>

  <footer class="taskbar">
    <div class="search"><span>索</span>
      <svg class="hill" viewBox="0 0 80 40"><path d="M0 40C1 26 8 20 16 20 26 14 32 8 38 4l6 6 12 6c6 4 6 6 14 8l10 4v12z" fill="#6a7c2c"/><path d="M38 4l6 6-4 8-8-2-10 8-10 2 8-8z" fill="#a8984e"/><path d="M4 36c10-12 18-12 26-16M10 40c12-14 22-8 28-18M56 16c6 6 12 8 22 12M30 40c8-10 30-10 48-8" fill="none" stroke="#d0c878" stroke-width="2"/><path d="M36 24l3-6 3 5h10l3-6 3 12-6 7H40l-6-5z" fill="#d8d4c0" stroke="#8a8264"/><path d="M16 40c4-8 20-8 40-4l24-8v12z" fill="#3d5c22"/><path d="M30 38c14-8 30-4 44-8" fill="none" stroke="#8ca848" stroke-width="2"/></svg>
    </div>
    <button class="app-btn plain" aria-label="任务视图"><svg viewBox="0 0 24 24"><path d="M3 1v5h12V1M3 23v-5h12v5M3 9h12v6H3zM20 2v6M20 13v9" fill="none" stroke="#ddd" stroke-width="1.500"/><path d="M18 9h4v3h-4z" fill="#fff"/></svg></button>
    <button class="app-btn" aria-label="文件资源管理器"><svg viewBox="0 0 24 24"><path d="M1 3h9l2 2h11v17H1z" fill="#f0b93c"/><path d="M1 7h22v15H1z" fill="#fcdc78"/><path d="M5 13h14v9h-4v-5H9v5H5z" fill="#3e93cc"/></svg></button>
    <button class="app-btn" aria-label="Chrome"><svg viewBox="0 0 24 24"><circle cx="12" cy="12" r="11" fill="#2fa24c"/><path d="M12 1a11 11 0 0 1 0 0M21.700 6.500A11 11 0 0 1 11 23l5-9-4-7.500z" fill="#f8c938"/><path d="M2.500 6.500A11 11 0 0 1 21.500 6.500H12l-4 8z" fill="#dc4134"/><circle cx="12" cy="12" r="5.500" fill="#fff"/><circle cx="12" cy="12" r="4.200" fill="#3e78dc"/></svg></button>
    <button class="app-btn" aria-label="命令提示符"><svg viewBox="0 0 24 24"><rect x="1" y="3" width="22" height="19" fill="#050505" stroke="#aaa"/><path d="M1 4h22" stroke="#ddd" stroke-width="2"/><path d="M4 8h2v3H4M8 8v3M10 8l1 3M13 11h5" fill="none" stroke="#ccc"/></svg></button>
    <button class="app-btn" aria-label="录屏"><svg viewBox="0 0 24 24"><circle cx="11" cy="12" r="10" fill="#111" stroke="#ddd" stroke-width="1.500"/><path d="M11 12c-4-1-5-5-3-8M11 12c3-3 7-2 8 1M11 12c1 4-2 7-6 6" stroke="#ddd" stroke-width="2" fill="none"/><circle cx="17" cy="18" r="5.500" fill="#f00808"/></svg></button>
    <button class="app-btn active" aria-label="Abaqus"><svg viewBox="0 0 24 24"><path d="M8 1q4-2 8 0l1 5 4 3 2 3-2 3-4 3-1 5q-4 2-8 0l-1-5-4-3-2-3 2-3 4-3z" fill="#7279a8"/><path d="M12 1v22" stroke="#9da3cc" stroke-width="3"/><path d="M1 12h22" stroke="#fff" stroke-width="2"/></svg></button>
    <button class="app-btn" aria-label="WPS"><svg viewBox="0 0 24 24"><path d="M1 3h22l-2 5h-3l1-2h-4L9 22H6L1 6z" fill="#e03c28"/><path d="M4 6h3l2 8 3-8h2L8 19z" fill="#101010"/><path d="M12 22l4-11 2 4 2-6h3l-5 13h-3l-1-3-1 3z" fill="#f0552c"/></svg></button>
    <div class="tray">
      <svg class="plug" viewBox="0 0 12 22"><path d="M3 1v5M9 1v5M6 14v8" stroke="#fff" stroke-width="2"/><path d="M0 5h12v5c0 6-12 6-12 0z" fill="#fff"/></svg>
      <span class="battery">97%</span>
      <svg class="up" viewBox="0 0 14 14"><path d="M1 10l6-6 6 6" fill="none" stroke="#ddd" stroke-width="1.500"/></svg>
      <svg class="wifi" viewBox="0 0 14 14"><path d="M1 13C1 6 6 1 13 1" fill="none" stroke="#666"/><path d="M4 13c0-5 4-9 9-9M7 13c0-3 3-6 6-6M9 13c0-2 2-3 4-3" fill="none" stroke="#ddd"/><circle cx="12" cy="12" r="1.500" fill="#fff"/></svg>
      <svg class="spk" viewBox="0 0 16 14"><path d="M1 5h2l4-4v12L3 9H1zM10 5l5 5M15 5l-5 5" fill="none" stroke="#ddd"/></svg>
      <span class="ime">英</span><span class="pin">拼</span>
      <time>17:16<br>2023/4/18</time>
    </div>
  </footer>
</div>
<script src="script.js"></script>
</body>
</html>
```
FILE: styles.css
```css
* { box-sizing: border-box; }
body { margin: 0; overflow: hidden; background: #f0f0f0; color: #111; font: 12px/16px "Open Sans", "Noto Sans CJK SC", sans-serif; }
p, ul, ol { margin: 0; padding: 0; list-style: none; }
button { border: 0; padding: 0; background: none; color: inherit; font: inherit; }
.defs { position: absolute; width: 0; height: 0; }
.app { display: flex; flex-direction: column; min-height: 100vh; overflow: hidden; }

.titlebar { display: flex; justify-content: space-between; align-items: center; height: 25px; padding: 0 30px 2px 0; background: #488006; color: #dff0c8; font-size: 13px; white-space: nowrap; }
.titlebar span { margin-left: -9px; }
.minimize { width: 11px; height: 1px; background: #e8f0d8; }

.menubar { display: flex; align-items: center; gap: 17px; height: 24px; background: linear-gradient(90deg, #fdfdfd, #f1f1f1 50%); white-space: nowrap; }
.menubar u { text-underline-offset: 2px; }
.menubar .latin, .combo .latin { font-size: 13px; }
.help { display: flex; align-items: center; margin-left: -8px; }
.help .ic { width: 18px; height: 18px; margin-right: -7px; }

.toolbar { display: flex; height: 28px; background: linear-gradient(90deg, #fbfbfb, #f1f1f1 50%); }
.group { display: flex; align-items: stretch; flex: none; border: solid #a8a8a8; border-width: 1px 1px 1px 0; background: linear-gradient(#fff, #ececec); }
.toolbar.second .group { border-top: 0; padding-top: 1px; }
.first-group { padding-left: 2px; }
.views { margin-left: 85px; }
.tb { display: flex; flex: none; align-items: center; justify-content: center; width: 26px; position: relative; }
.tb.narrow { width: 24px; }
.tb.on { background: #c6e2f7; box-shadow: inset 0 0 0 1px #a4cdec; }
.ic { width: 20px; height: 20px; overflow: visible; }
.grip { width: 8px; margin: 6px 0; background: linear-gradient(#999 50%, transparent 50%) 3px 0 / 2px 4px repeat-y; }
.grip.wide { width: 10px; }
.rule { width: 1px; margin: 4px 0; background: #999; }
.caret { width: 13px; }
.caret::before { content: ""; display: block; margin-left: 3px; border: 4px solid transparent; border-top: 5px solid #000; border-bottom: 0; }
.format { width: 46px; }
.format span { position: absolute; left: 1px; top: 5px; white-space: nowrap; }
.num { color: #b02818; font: bold 18px/18px "Liberation Sans", sans-serif; }
.ax sup, .ax sub { position: absolute; color: #a82c20; font: bold 9px/9px "Liberation Sans", sans-serif; }
.ax sup { left: 8px; top: 2px; }
.ax sub { right: 1px; bottom: 8px; }
.ax.rev sup { left: 12px; }
.ax.rev sub { left: 3px; right: auto; }
.ax.down sup { left: 17px; top: 8px; }
.ax.down sub { right: 11px; bottom: 2px; }
.ax.iso sup { left: 10px; top: -1px; }
.ax.iso sub { left: 0; right: 0; bottom: 0; display: flex; justify-content: space-between; }

.combo { position: relative; display: flex; height: 26px; border: 1px solid #999; background: #fff; }
.combo select { flex: 1; min-width: 0; padding: 0 14px 0 3px; border: 0; background: none; appearance: none; color: #111; font: inherit; }
.combo .file { padding-right: 11px; font: 13px/16px Roboto, sans-serif; }
.combo::after { content: ""; position: absolute; right: 0; top: 0; bottom: 0; width: 11px; border: 1px solid #aaa; background: #ddd; pointer-events: none; }
.combo::before { content: ""; position: absolute; z-index: 1; right: 3px; top: 8px; width: 5px; height: 5px; border: solid #555; border-width: 0 1px 1px 0; transform: rotate(45deg); pointer-events: none; }
.w73 { width: 73px; } .w89 { width: 89px; } .w92 { width: 92px; } .w93 { width: 93px; } .w98 { width: 98px; } .w138 { width: 138px; } .w445 { width: 446px; }

.context { display: flex; align-items: center; height: 33px; padding-left: 111px; background: linear-gradient(90deg, #fff 105px, transparent 105px), linear-gradient(#fff, #ededed); }
.context label { width: 32px; white-space: nowrap; }
.context .combo { height: 24px; border-color: #777 #bbb #bbb #777; border-top-width: 2px; }
.context .combo + label { margin-left: 13px; }
.spinner { width: 11px; background: #eee; border-right: 1px solid #bbb; display: flex; flex-direction: column; justify-content: center; gap: 5px; align-items: center; }
.spinner::before, .spinner::after { content: ""; border: 3px solid transparent; }
.spinner::before { border-bottom: 4px solid #000; border-top: 0; }
.spinner::after { border-top: 4px solid #000; border-bottom: 0; }
.player { display: flex; gap: 4px; margin-left: auto; padding-right: 8px; }
.arrange { display: flex; flex: none; align-items: center; width: 45px; height: 26px; border-left: 1px solid #999; padding-left: 7px; gap: 6px; }
.cylinder { width: 6px; height: 17px; border-radius: 4px 0 0 4px; background: linear-gradient(90deg, #bbb, #444); }

.work { flex: 1; display: grid; grid-template: 1fr 34px / 98px 7px 60px 1fr; min-height: 0; background: #fafafa; }
.tree { grid-row: 1 / 3; border: solid #999; border-width: 1px 1px 1px 0; background: #fff; }
.tree-tools { display: flex; align-items: center; height: 33px; border-bottom: 1px solid #999; background: linear-gradient(#fff, #f1f1f1); overflow: hidden; }
.tree-tools .edge { width: 1px; height: 24px; background: #999; }
.tree-tools .ic { width: 20px; height: 20px; }
.updn { width: 22px; padding-left: 2px; display: flex; flex-direction: column; align-items: center; gap: 5px; }
.updn::before, .updn::after { content: ""; border: 5px solid transparent; }
.updn::before { border-bottom: 5px solid #888; border-top: 0; }
.updn::after { border-top: 5px solid #888; border-bottom: 0; }
.tree li { height: 20px; line-height: 20px; }
.tree ul { padding-top: 1px; }

.toolbox { grid-column: 3; border-top: 1px solid #999; background: linear-gradient(90deg, #fff, #ececec); }
.tools { display: grid; grid-template-columns: 28px 28px; grid-auto-rows: 28px; padding: 5px 0 1px 1px; margin-right: 2px; border-bottom: 1px solid #999; }
.tools.last { border: 0; }
.tools .tb { margin: 1px; }
.tools .ic { width: 22px; height: 22px; }
.numbered b, .numbered small { position: absolute; left: 0; right: 0; text-align: center; white-space: nowrap; font: bold 8px/8px "Liberation Sans", sans-serif; }
.numbered b { top: 6px; }
.numbered small { top: 18px; }

.viewport { grid-column: 4; position: relative; min-height: 776px; overflow: hidden; background: linear-gradient(#1b2d48 0%, #24354f 30%, #2d3e58 52%, #4b5b76 69%, #73839c 84%, #a2b0c7 100%); color: #e9edf3; font: 15px/17px "DejaVu Sans", "Noto Sans CJK SC", sans-serif; }
.scene { position: absolute; left: 0; top: 0; width: 100%; height: 100%; }
.scene text { fill: #fff; font-size: 15px; }
.cursor { position: absolute; left: 711px; top: 626px; width: 12px; height: 20px; }
.legend { position: absolute; left: 33px; top: 16px; width: 167px; height: 290px; padding: 16px 14px; border: 1px solid #fff; }
.legend p { height: 19px; line-height: 19px; }
.scale { display: flex; margin-top: 9px; }
.bar { width: 24px; border: 1px solid #eee; border-top: 0; }
.bar i { display: block; height: 15px; border-top: 1px solid #e8e8e8; position: relative; }
.bar i:not(:first-child)::after { content: ""; position: absolute; left: 22px; top: -1px; width: 8px; height: 1px; background: #fff; }
.legend ol { padding: 7px 0 0 15px; }
.legend li { height: 15px; line-height: 15px; }
.c0 { background: #ccc; } .c1 { background: #f00; } .c2 { background: #ff5c00; } .c3 { background: #ffb400; } .c4 { background: #e8ff00; } .c5 { background: #8bff00; } .c6 { background: #2eff00; } .c7 { background: #00ff2e; } .c8 { background: #00ff8b; } .c9 { background: #00ffe8; } .c10 { background: #00b9ff; } .c11 { background: #005dff; } .c12 { background: #00f; } .c13 { background: #333; }

.state { position: absolute; left: 221px; top: 639px; white-space: nowrap; }
.state p { height: 17px; font-size: 15px; }
.state .odb { display: flex; gap: 19px; margin-bottom: 28px; font-size: 16px; }
.state em { font-style: normal; opacity: .4; }
.state .inc { display: flex; gap: 20px; font-size: 16px; }
.state .mid { font-size: 15px; }
.state .def { display: flex; gap: 16px; }
.frame-info { position: absolute; left: 1439px; top: 11px; color: #d8883c; font: 15px/19px "Liberation Mono", "Noto Sans CJK SC", monospace; white-space: nowrap; }
.frame-info span { font-size: 14px; }
.frame-info p { height: 18px; }
.compass { position: absolute; left: 1535px; top: 93px; width: 28px; height: 50px; }

.prompt { grid-column: 2 / 5; display: flex; justify-content: flex-end; padding: 6px 6px 4px; background: linear-gradient(#fff, #ededed); }
.ds { width: 22px; height: 24px; }

.messages { margin-top: 5px; height: 84px; padding-top: 3px; border: solid #aaa; border-width: 1px 0; background: #fff; color: #111; font: 13px/13px "Liberation Mono", "Noto Sans CJK SC", monospace; white-space: nowrap; }
.messages p { height: 13px; }
.messages span { font-size: 15px; line-height: 13px; }
.messages .cut { margin-left: -3px; }
.messages .more { margin-left: -10px; }

.taskbar { display: flex; flex: none; height: 40px; margin-top: 3px; background: #101010; color: #eee; overflow: hidden; }
.search { display: flex; align-items: center; justify-content: space-between; width: 224px; background: #f3f3f3; color: #333; }
.search span { margin-left: -8px; }
.hill { width: 80px; height: 40px; }
.app-btn { display: flex; align-items: center; justify-content: center; width: 49px; height: 40px; background: linear-gradient(#a0c878, #a0c878) center bottom / 40px 2px no-repeat; }
.app-btn.plain { background: none; width: 49px; }
.app-btn.active { background-color: #333; background-size: 49px 2px; }
.app-btn svg { width: 24px; height: 24px; }
.app-btn.plain svg { width: 18px; height: 18px; }
.tray { display: flex; align-items: center; margin-left: auto; white-space: nowrap; }
.plug { width: 12px; height: 22px; margin-right: 2px; }
.battery { width: 41px; height: 22px; margin-right: 9px; border: 2px solid #fff; background: #248a48; box-shadow: inset 0 0 0 1px #101010; text-align: center; line-height: 18px; color: #d8f0d8; position: relative; }
.battery::after { content: ""; position: absolute; right: -5px; top: 4px; width: 3px; height: 10px; background: #fff; }
.up, .wifi { width: 14px; height: 14px; }
.up { width: 13px; margin-right: 13px; }
.wifi { margin-right: 7px; }
.spk { width: 16px; height: 14px; margin-right: 7px; }
.ime { font-size: 16px; margin-right: 15px; }
.pin { width: 14px; height: 14px; margin-right: 18px; background: #fff; color: #000; font-size: 12px; line-height: 14px; text-align: center; }
.tray time { width: 60px; margin-right: -21px; text-align: center; line-height: 19px; }
```
FILE: script.js
```js
// Draws the element edges of each deformed strip between its two long sides.
function pointAt(poly, t) {
  const seg = [];
  let total = 0;
  for (let i = 1; i < poly.length; i++) {
    const d = Math.hypot(poly[i][0] - poly[i - 1][0], poly[i][1] - poly[i - 1][1]);
    seg.push(d);
    total += d;
  }
  let rest = t * total;
  for (let i = 0; i < seg.length; i++) {
    if (rest <= seg[i] || i === seg.length - 1) {
      const k = rest / seg[i];
      return [poly[i][0] + (poly[i + 1][0] - poly[i][0]) * k, poly[i][1] + (poly[i + 1][1] - poly[i][1]) * k];
    }
    rest -= seg[i];
  }
}

function strip(a, b, along, across, color) {
  let d = "";
  for (let i = 0; i <= along; i++) {
    d += "M" + pointAt(a, i / along) + "L" + pointAt(b, i / along);
  }
  for (let j = 0; j <= across; j++) {
    for (let i = 0; i <= along; i++) {
      const p = pointAt(a, i / along), q = pointAt(b, i / along), k = j / across;
      d += (i ? "L" : "M") + [p[0] + (q[0] - p[0]) * k, p[1] + (q[1] - p[1]) * k];
    }
  }
  const path = document.createElementNS("http://www.w3.org/2000/svg", "path");
  path.setAttribute("d", d);
  path.setAttribute("stroke", color);
  document.getElementById("mesh-lines").appendChild(path);
}

strip([[604, 602], [740, 606], [825, 610]], [[603, 643], [804, 648], [825, 648]], 31, 6, "#000070");
strip([[885, 610], [901, 606], [983, 588], [1069, 568], [1077, 564], [1107, 564]],
      [[889, 649], [922, 646], [983, 632], [1083, 609], [1114, 603]], 32, 6, "#0a2048");
strip([[838, 395], [827, 607], [827, 680], [821, 862]],
      [[892, 397], [886, 540], [884, 600], [880, 610], [886, 650], [885, 690], [877, 864]], 70, 7, "#0e4408");
```
